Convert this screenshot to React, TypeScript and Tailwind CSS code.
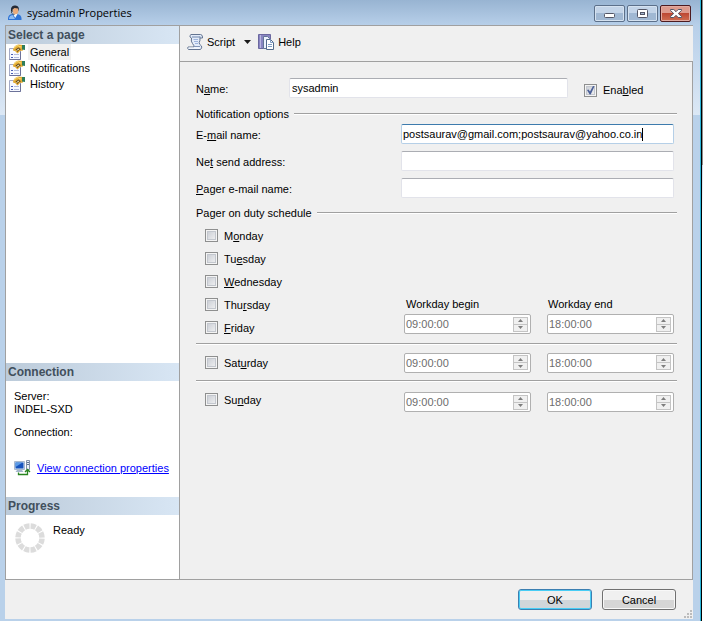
import React from "react";

interface TimeFieldProps {
  label: string;
  value: string;
}

const pages = ["General", "Notifications", "History"];

const weekdays = [
  { id: "monday", before: "M", key: "o", after: "nday" },
  { id: "tuesday", before: "Tu", key: "e", after: "sday" },
  { id: "wednesday", before: "", key: "W", after: "ednesday" },
  { id: "thursday", before: "Thu", key: "r", after: "sday" },
  { id: "friday", before: "", key: "F", after: "riday" },
];

const saturday = { id: "saturday", before: "Sat", key: "u", after: "rday" };
const sunday = { id: "sunday", before: "Su", key: "n", after: "day" };

const fieldClass =
  "h-5 w-full min-w-0 rounded-[2px] border border-[#e2e3ea] border-t-[#abadb3] bg-white px-[2px] outline-none";

function UserIcon() {
  return (
    <svg className="size-4 shrink-0" viewBox="0 0 16 16" aria-hidden="true">
      <path d="M1 15v-2q.5-3.500 4-4h5q4 .5 4.500 4v2z" fill="#2f74d6" />
      <path d="M2 14v-1q.5-2.500 3.500-3l2.500 4z" fill="#8dbcf2" />
      <path d="m6 9 2.200 4L10.500 9z" fill="#f4f8fc" />
      <ellipse cx="8.500" cy="5.500" rx="2.800" ry="3.800" fill="#e9ab7c" />
      <path d="M4 7V3.500Q5 0 8.500.5q4 .2 3.500 6l-1-3-3.500-.5-2 1.500V7z" fill="#252a35" />
      <path d="M4.500 6v2q1 1.500 3 1.500" fill="none" stroke="#4b5665" />
    </svg>
  );
}

function PageIcon() {
  return (
    <svg className="size-4 shrink-0" viewBox="0 0 16 16" aria-hidden="true">
      <path d="M.5 4.500h11v11H.5z" fill="#f7f9ff" stroke="#a3a9c6" />
      <path d="M.5 15.500h11v-8" fill="none" stroke="#6c7299" />
      <path d="M2 10.500h2m-2 3h2" stroke="#4a5fb5" />
      <path d="M5 10.500h5m-5 3h5" stroke="#b3bcdc" />
      <path d="M4 5 6 2l3-1.500 5 .5v5.500l-3 .5-2.500 2.500L6 7 4.500 7z" fill="#e3aa32" />
      <path d="m5 4.500 2-2.500 2.500-.5M9.500 2.500l3 .5" fill="none" stroke="#f8de7c" />
      <path d="m6.500 5.500 3-2 2.500 2-2 .5L8.500 8z" fill="#5c4520" />
      <path d="M7.500 6.500 10 5" stroke="#fff3b5" />
      <path d="M13 1h3v5l-3-.5z" fill="#2f7d5a" />
    </svg>
  );
}

function ScriptIcon() {
  return (
    <svg className="size-4 shrink-0" viewBox="0 0 16 16" aria-hidden="true">
      <path
        d="M4 .5h9.500q2 .3 2 2.500v1H13q.2 3-.8 4.500-.5 1.500 2.300 3.500.8 2-1 3.500H1.500q-1.300-1-.5-2.500h6q.3-1.500-1.500-3.500T4.500 4L3 3Q2.500 1.200 4 .5z"
        fill="#e3ecfa"
        stroke="#637491"
      />
      <path d="M5 3h8M13 4V2.500" fill="none" stroke="#7187ad" />
      <path d="M6.500 5.500H11m-4 2h4m-3 2h3" stroke="#9fb5de" />
      <path d="M7 12.500h6" stroke="#8195b8" />
      <path d="M1.500 14h11" stroke="#fff" />
    </svg>
  );
}

function HelpIcon() {
  return (
    <svg className="size-4 shrink-0" viewBox="0 0 16 16" aria-hidden="true">
      <path d="M.5.500h12v14H.5z" fill="#8985c2" stroke="#6b689f" />
      <path d="M2.500 1v13" stroke="#b9b6df" />
      <path d="M5.500 2.500h4l2 2v10h-6z" fill="#eef4ff" stroke="#637696" />
      <path d="M8.500 5.500h4l3 3v7h-7z" fill="#fff" stroke="#536b8c" />
      <path d="M12.500 5.500v3h3M10 10.500h4m-4 2h4" fill="none" stroke="#7d9bc4" />
    </svg>
  );
}

function ServerIcon() {
  return (
    <svg className="h-4 w-[17px] shrink-0" viewBox="0 0 17 16" aria-hidden="true">
      <path d="M.5 1.500h10v8H.5z" fill="#d8e7f8" stroke="#a9b9cd" />
      <path d="M1.500 2.500h8v6h-8z" fill="#1653bd" />
      <path d="M1.500 2.500h7l-7 4.500z" fill="#5b9be6" />
      <path d="M3 10h5l1.500 2h-8z" fill="#a4b5cc" />
      <path d="M12.500.5h3v9h-3z" fill="#edf3fa" stroke="#8292a9" />
      <path d="M13 2.500h2m-2 2h2" stroke="#5e7492" />
      <path d="M4.500 12.500v2h9v-5M11 12l2.500-2.500L16 12" fill="none" stroke="#28841f" strokeWidth="1.300" />
    </svg>
  );
}

function ProgressRing() {
  return (
    <svg className="size-[30px] shrink-0" viewBox="0 0 30 30" aria-hidden="true">
      <circle
        cx="15"
        cy="15"
        r="12"
        fill="none"
        stroke="#dcdcdc"
        strokeWidth="5.500"
        pathLength="120"
        strokeDasharray="8.200 1.800"
        strokeDashoffset="-1"
      />
    </svg>
  );
}

function SectionHeader({ children }: { children: React.ReactNode }) {
  return (
    <h2 className="h-[18px] bg-linear-to-r from-[#bccbda] to-[#d8e6f4] px-[2px] text-[12px] leading-[18px] font-bold text-[#414f5c]">
      {children}
    </h2>
  );
}

function GroupTitle({ children }: { children: React.ReactNode }) {
  return (
    <div className="flex h-4 items-center gap-[5px]">
      <h3>{children}</h3>
      <Divider />
    </div>
  );
}

function Divider() {
  return <div className="h-[2px] flex-1 border-t border-[#a0a0a0] bg-white" />;
}

function CheckBox({ id, checked = false }: { id: string; checked?: boolean }) {
  return (
    <span className="relative flex size-[13px] shrink-0">
      <input
        id={id}
        type="checkbox"
        defaultChecked={checked}
        className="peer size-[13px] appearance-none border border-[#8e8f8f] bg-linear-to-br from-[#c4c8d0] to-[#f6f6f6] shadow-[inset_0_0_0_1px_#f4f4f4,inset_0_0_0_2px_#c3c7ce]"
      />
      <svg
        className="pointer-events-none absolute inset-0 hidden peer-checked:block"
        viewBox="0 0 13 13"
        aria-hidden="true"
      >
        <path d="m3 6 1.500-.5L6 7.500 9 2l1.500.3-3.800 8.200h-1z" fill="#4a5f97" />
      </svg>
    </span>
  );
}

function DayCheck({ day }: { day: typeof saturday }) {
  return (
    <div className="flex h-[23px] items-center gap-[6px] pl-[9px]">
      <CheckBox id={day.id} />
      <label htmlFor={day.id}>
        {day.before}
        <u>{day.key}</u>
        {day.after}
      </label>
    </div>
  );
}

function TimeField({ label, value }: TimeFieldProps) {
  return (
    <div className="flex h-5 min-w-0 flex-1 items-center rounded-[2px] border border-[#b0b0b0] bg-white pr-[2px] text-[#6d6d6d]">
      <input aria-label={label} defaultValue={value} disabled className="w-full min-w-0 flex-1 px-[1px]" />
      <div className="flex w-[15px] shrink-0 flex-col border border-[#c4c4c4] bg-[#c4c4c4]">
        <button disabled aria-label="Increase" className="flex h-[6px] items-center justify-center bg-[#f0f0f0]">
          <svg className="h-[3px] w-[5px]" viewBox="0 0 5 3" aria-hidden="true">
            <path d="M0 3 2.500 0 5 3z" fill="#7d7d7d" />
          </svg>
        </button>
        <button disabled aria-label="Decrease" className="mt-[1px] flex h-[6px] items-center justify-center bg-[#f0f0f0]">
          <svg className="h-[3px] w-[5px]" viewBox="0 0 5 3" aria-hidden="true">
            <path d="M0 0h5L2.500 3z" fill="#7d7d7d" />
          </svg>
        </button>
      </div>
    </div>
  );
}

function TimeRange({ name }: { name: string }) {
  return (
    <div className="flex min-w-0 flex-1 gap-4 pr-[3px]">
      <TimeField label={`${name} begin`} value="09:00:00" />
      <TimeField label={`${name} end`} value="18:00:00" />
    </div>
  );
}

function TitleBar() {
  const control =
    "flex h-[17px] w-[31px] items-center justify-center rounded-[2px] border border-[#5c708a] bg-linear-to-b from-[#c3d4e8] from-50% to-[#a0b8d3] to-50% shadow-[inset_0_0_0_1px_#d5e2f0]";
  return (
    <header className="flex h-[25px] items-center bg-linear-to-b from-[#98b4d2] to-[#b7cfe9] pr-[9px] pl-[7px]">
      <UserIcon />
      <h1 className="ml-1 flex-1 font-['Open_Sans',sans-serif] text-[11px] leading-4">sysadmin Properties</h1>
      <div className="flex gap-[2px] pt-[2px]">
        <button aria-label="Minimize" className={control}>
          <svg className="mt-1 h-[5px] w-[11px]" viewBox="0 0 11 5" aria-hidden="true">
            <rect x=".5" y=".5" width="10" height="4" rx="1" fill="#fff" stroke="#535666" />
          </svg>
        </button>
        <button aria-label="Maximize" className={control}>
          <svg className="h-[9px] w-[11px]" viewBox="0 0 11 9" aria-hidden="true">
            <rect x=".5" y=".5" width="10" height="8" rx="1" fill="#fff" stroke="#535666" />
            <rect x="3.500" y="3.500" width="4" height="2" fill="#a5b8d0" stroke="#535666" />
          </svg>
        </button>
        <button
          aria-label="Close"
          className="flex h-[17px] w-[31px] items-center justify-center rounded-[2px] border border-[#4d1b20] bg-linear-to-b from-[#dd9a8d] from-45% via-[#bb4430] via-45% to-[#cf6e52] shadow-[inset_0_0_0_1px_#e2aaa0]"
        >
          <svg className="h-[9px] w-3" viewBox="0 0 12 9" aria-hidden="true">
            <path d="M.5.500h3.300L6 2.700 8.200.5h3.300v1L8.300 4.500l3.200 3v1H8.200L6 6.300 3.800 8.500H.5v-1l3.200-3-3.200-3z" fill="#fff" stroke="#535666" />
          </svg>
        </button>
      </div>
    </header>
  );
}

function Sidebar() {
  return (
    <aside className="flex w-[175px] shrink-0 flex-col border-x border-[#a0a0a0] bg-white">
      <SectionHeader>Select a page</SectionHeader>
      <nav className="flex-1 pl-[3px]">
        {pages.map((page) => (
          <a key={page} href={`#${page.toLowerCase()}`} className="flex h-4 items-center gap-[3px]">
            <PageIcon />
            <span className={page === "General" ? "bg-[#f0f0f0] px-[2px] leading-4" : "px-[2px] leading-4"}>{page}</span>
          </a>
        ))}
      </nav>

      <section className="h-[134px]">
        <SectionHeader>Connection</SectionHeader>
        <div className="px-2 pt-[9px] leading-[13px]">
          <p>Server:</p>
          <p>INDEL-SXD</p>
          <p className="mt-[10px]">Connection:</p>
          <a href="#connection" className="mt-[21px] flex items-center gap-[6px] text-[#0000ff] underline">
            <ServerIcon />
            View connection properties
          </a>
        </div>
      </section>

      <section className="h-[82px]">
        <SectionHeader>Progress</SectionHeader>
        <div className="flex gap-2 px-[9px] pt-2">
          <ProgressRing />
          <p className="leading-[14px]">Ready</p>
        </div>
      </section>
    </aside>
  );
}

function Toolbar() {
  return (
    <div className="flex h-9 items-center border-b border-[#a0a0a0] pb-1 pl-[7px]">
      <button className="flex items-center gap-1">
        <ScriptIcon />
        Script
      </button>
      <button aria-label="Script options" className="ml-2 p-[1px]">
        <svg className="h-1 w-[7px]" viewBox="0 0 7 4" aria-hidden="true">
          <path d="M0 0h7L3.500 4z" fill="#1a1a1a" />
        </svg>
      </button>
      <button className="ml-[6px] flex items-center gap-1">
        <HelpIcon />
        Help
      </button>
    </div>
  );
}

function GeneralPage() {
  return (
    <form className="flex-1 border-r border-[#a0a0a0] pt-4 pr-[15px] pl-4">
      <div className="flex items-center">
        <label htmlFor="name" className="w-[93px] shrink-0 pt-[2px]">
          N<u>a</u>me:
        </label>
        <input id="name" defaultValue="sysadmin" className={fieldClass} />
        <div className="flex w-[109px] shrink-0 items-center gap-[6px] pt-1 pl-4">
          <CheckBox id="enabled" checked />
          <label htmlFor="enabled">
            Ena<u>b</u>led
          </label>
        </div>
      </div>

      <div className="mt-2">
        <GroupTitle>Notification options</GroupTitle>
      </div>
      <div className="mt-[2px] grid grid-cols-[205px_1fr] items-center gap-y-[7px] pr-[3px]">
        <label htmlFor="email" className="pt-[2px]">
          E-<u>m</u>ail name:
        </label>
        <div className="flex h-5 min-w-0 items-center rounded-[2px] border border-[#b5cfe7] border-t-[#3d7bad] bg-white pl-[1px]">
          <input
            id="email"
            defaultValue="postsaurav@gmail.com;postsaurav@yahoo.co.in"
            className="field-sizing-content max-w-full min-w-0 outline-none"
          />
          <span className="h-[13px] w-px bg-black" />
        </div>
        <label htmlFor="netsend" className="pt-[2px]">
          Ne<u>t</u> send address:
        </label>
        <input id="netsend" className={fieldClass} />
        <label htmlFor="pager" className="pt-[2px]">
          <u>P</u>ager e-mail name:
        </label>
        <input id="pager" className={fieldClass} />
      </div>

      <div className="mt-[7px]">
        <GroupTitle>Pager on duty schedule</GroupTitle>
      </div>
      <div className="mt-[3px] flex items-end">
        <div className="w-52 shrink-0">
          {weekdays.map((day) => (
            <DayCheck key={day.id} day={day} />
          ))}
        </div>
        <div className="flex min-w-0 flex-1 flex-col gap-[2px] pb-[5px]">
          <div className="flex gap-4 pr-[3px] pl-[2px]">
            <span className="flex-1">Workday begin</span>
            <span className="flex-1">Workday end</span>
          </div>
          <TimeRange name="Workday" />
        </div>
      </div>
      <div className="flex pt-1">
        <Divider />
      </div>
      <div className="flex h-[35px] items-center">
        <div className="w-52 shrink-0">
          <DayCheck day={saturday} />
        </div>
        <TimeRange name="Saturday" />
      </div>
      <div className="flex">
        <Divider />
      </div>
      <div className="flex pt-[10px]">
        <div className="-mt-1 w-52 shrink-0">
          <DayCheck day={sunday} />
        </div>
        <TimeRange name="Sunday" />
      </div>
    </form>
  );
}

function Footer() {
  return (
    <footer className="relative flex h-10 items-center justify-end gap-[10px] border-t border-[#a0a0a0] bg-[#f0f0f0] pr-[17px]">
      <button className="h-[21px] w-[74px] rounded-[3px] border border-[#3c7fb1] bg-linear-to-b from-[#efefef] from-50% to-[#d0d6da] to-50% shadow-[inset_0_0_0_1px_#48cdf5]">
        OK
      </button>
      <button className="h-[21px] w-[74px] rounded-[3px] border border-[#707070] bg-linear-to-b from-[#f0f0f0] from-50% to-[#d6d6d6] to-50% shadow-[inset_0_0_0_1px_#f8f8f8]">
        Cancel
      </button>
      <svg className="absolute right-[1px] bottom-[1px] size-2" viewBox="0 0 8 8" aria-hidden="true">
        <path d="M6 0h2v2H6zM3 3h2v2H3zM6 3h2v2H6zM0 6h2v2H0zM3 6h2v2H3zM6 6h2v2H6z" fill="#bcbcbc" />
      </svg>
    </footer>
  );
}

export default function App() {
  return (
    <div className="flex min-h-screen font-['Liberation_Sans',sans-serif] text-[11px] leading-4 text-black">
      <div className="flex min-w-0 flex-1 flex-col bg-[#b9d1ea]">
        <TitleBar />
        <div className="flex flex-1 bg-linear-to-b from-[#b7cfe9] via-[#dce8f5] via-[90px] to-[#b9d1ea] to-[90px] pr-[7px] pb-[2px] pl-[5px]">
          <div className="flex min-w-0 flex-1 flex-col border-t border-[#a0a0a0] bg-[#f0f0f0]">
            <div className="flex flex-1">
              <Sidebar />
              <main className="flex min-w-0 flex-1 flex-col">
                <Toolbar />
                <GeneralPage />
              </main>
            </div>
            <Footer />
          </div>
        </div>
      </div>
      <div className="w-[3px] shrink-0 border-l border-[#2ab5d8] bg-linear-to-b from-[#8c8c8c] from-[165px] via-[#c7d7ea] via-[165px] to-white to-[215px]">
        <div className="h-full w-px bg-black" />
      </div>
    </div>
  );
}
